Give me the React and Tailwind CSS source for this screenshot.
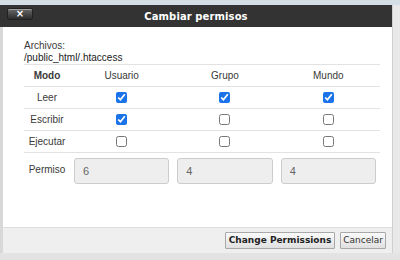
import React from 'react';

const rows = [
    { label: 'Leer', values: [true, true, true] },
    { label: 'Escribir', values: [true, false, false] },
    { label: 'Ejecutar', values: [false, false, false] },
];

const Check = ({ checked }) => (
    <input
        type="checkbox"
        defaultChecked={checked}
        className="w-[11px] h-[11px] m-0 accent-[#1a73e8]"
    />
);

export default function App() {
    return (
        <div className="w-[400px] h-[260px] flex flex-col bg-[#e3e3e3] overflow-hidden font-['Liberation_Sans',Arial,sans-serif]">
            {/* page strip above the dialog */}
            <div className="h-[5px] bg-[#d3dee5]" />

            <div className="flex flex-1">
                {/* Dialog */}
                <div className="w-[392px] h-[248px] flex flex-col">
                    {/* Title bar */}
                    <div className="h-[22px] bg-[#333333] flex items-center relative">
                        <button className="absolute left-[7px] top-[3px] w-[26px] h-[12px] rounded-[2px] bg-gradient-to-b from-[#6a6a6a] to-[#2c2c2c] border border-[#222] flex items-center justify-center shadow-[inset_0_1px_0_rgba(255,255,255,0.35)]">
                            <span className="text-white text-[10px] font-bold leading-none font-['DejaVu_Sans',sans-serif]">×</span>
                        </button>
                        <h1 className="w-full text-center text-white font-bold text-[10px] tracking-[0.1px] font-['DejaVu_Sans',Verdana,sans-serif]">
                            Cambiar permisos
                        </h1>
                    </div>

                    {/* Body */}
                    <div className="flex-1 bg-white border-l-[3px] border-[#d8d8d8] pl-[21px] pr-[12px] pt-[13px] text-[#3a3a3a] text-[10px]">
                        <div className="leading-[12px]">Archivos:</div>
                        <div className="leading-[11px] text-[#222]">/public_html/.htaccess</div>

                        <div className="mt-[1px] w-[356px] border-t border-[#e2e2e2]">
                            <div className="grid grid-cols-[46px_1fr_1fr_1fr] h-[22px] items-center border-b border-[#e2e2e2] text-center">
                                <span className="font-bold">Modo</span>
                                <span>Usuario</span>
                                <span>Grupo</span>
                                <span>Mundo</span>
                            </div>
                            {rows.map(r => (
                                <div key={r.label} className="grid grid-cols-[46px_1fr_1fr_1fr] h-[22px] items-center border-b border-[#e2e2e2] text-center">
                                    <span>{r.label}</span>
                                    {r.values.map((v, i) => (
                                        <span key={i} className="flex justify-center">
                                            <Check checked={v} />
                                        </span>
                                    ))}
                                </div>
                            ))}
                            <div className="grid grid-cols-[46px_1fr_1fr_1fr] pt-[5px]">
                                <span className="text-center pt-[6px] leading-[12px]">Permiso</span>
                                {['6', '4', '4'].map((v, i) => (
                                    <div key={i} className="px-[4px]">
                                        <input
                                            readOnly
                                            value={v}
                                            className="w-full h-[26px] bg-[#eeeeee] border border-[#cccccc] rounded-[3px] px-[8px] text-[11px] text-[#666] outline-none"
                                        />
                                    </div>
                                ))}
                            </div>
                        </div>
                    </div>

                    {/* Footer */}
                    <div className="h-[26px] bg-[#efefef] border-t border-[#dddddd] border-l-[3px] border-l-[#d8d8d8] flex items-center justify-end gap-[5px] pr-[6px] font-['DejaVu_Sans',Verdana,sans-serif] text-[9px] text-[#222]">
                        <button className="h-[17px] px-[3px] bg-gradient-to-b from-[#fafafa] to-[#e0e0e0] border border-[#a8a8a8] rounded-[1px] font-bold">
                            Change Permissions
                        </button>
                        <button className="h-[17px] px-[2px] bg-gradient-to-b from-[#fafafa] to-[#e0e0e0] border border-[#a8a8a8] rounded-[1px] text-[#333]">
                            Cancelar
                        </button>
                    </div>
                </div>

                {/* page behind, right side */}
                <div className="flex-1 h-[248px] border-l border-[#cfcfcf] bg-[#e8e8e8]" />
            </div>
        </div>
    );
}
